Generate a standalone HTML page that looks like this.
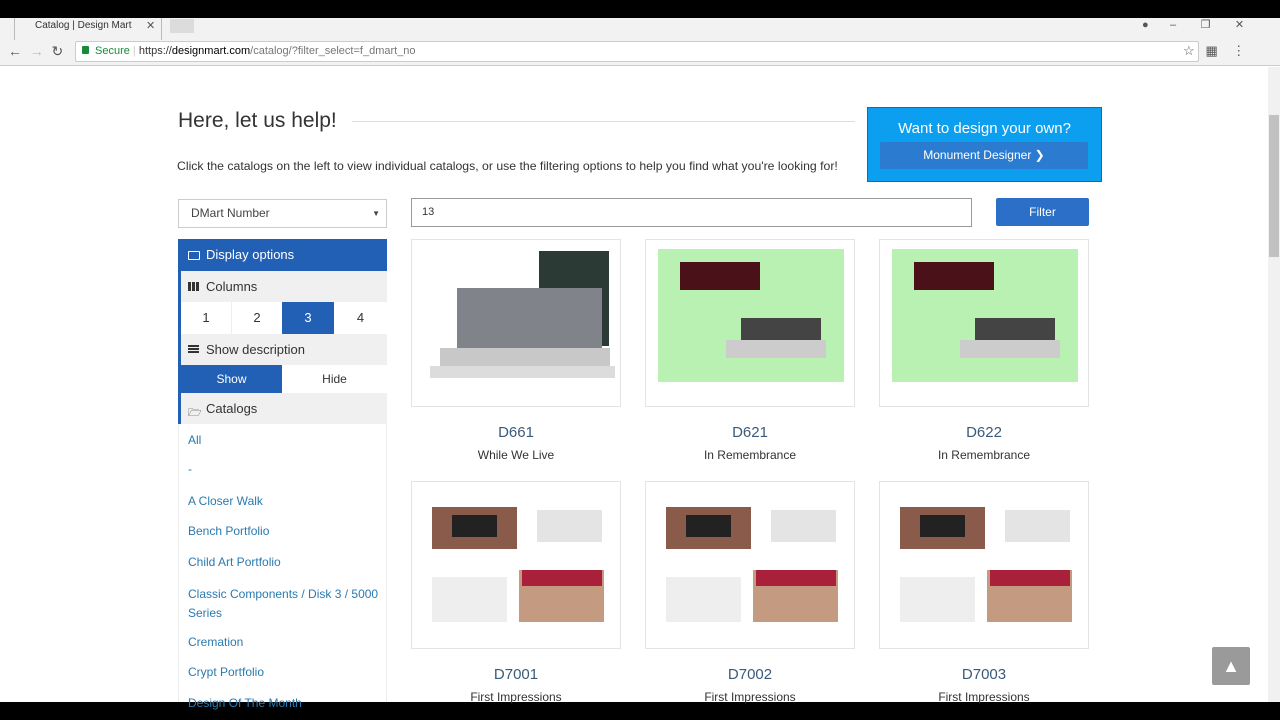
<!DOCTYPE html><html><head><style>
*{box-sizing:border-box;margin:0;padding:0}
body{width:1280px;height:720px;overflow:hidden;background:#fff;font-family:"Liberation Sans",sans-serif;position:relative;color:#333}
.a{position:absolute}
.card{position:absolute;width:210px;height:168px;border:1px solid #e3e3e3;background:#fff}
.t{position:absolute;width:210px;text-align:center;font-size:15px;color:#3a5a7a}
.s{position:absolute;width:210px;text-align:center;font-size:12px;color:#333}
.lnk{position:absolute;left:188px;font-size:12px;color:#2a7ab0}
</style></head><body>
<div class="a" style="left:0;top:0;width:1280px;height:18px;background:#000"></div>
<div class="a" style="left:0;top:18px;width:1280px;height:48px;background:#f2f2f2;border-bottom:1px solid #ccc"></div>
<div class="a" style="left:14px;top:18px;width:148px;height:22px;background:#f2f2f2;border-left:1px solid #bbb;border-right:1px solid #bbb"></div>
<div class="a" style="left:170px;top:19px;width:24px;height:14px;background:#dcdcdc"></div>
<div class="a" style="left:35px;top:20px;font-size:10px;color:#333">Catalog | Design Mart</div>
<div class="a" style="left:146px;top:19px;font-size:11px;color:#555">✕</div>
<div class="a" style="left:1142px;top:18px;font-size:11px;color:#555">●&nbsp;&nbsp;&nbsp;&nbsp;&nbsp;&nbsp;&nbsp;–&nbsp;&nbsp;&nbsp;&nbsp;&nbsp;&nbsp;&nbsp;&nbsp;❐&nbsp;&nbsp;&nbsp;&nbsp;&nbsp;&nbsp;&nbsp;&nbsp;✕</div>
<div class="a" style="left:8px;top:43px;font-size:14px;color:#555">←&nbsp;&nbsp;<span style="color:#bbb">→</span>&nbsp;&nbsp;↻</div>
<div class="a" style="left:75px;top:41px;width:1124px;height:21px;background:#fff;border:1px solid #ccc;border-radius:2px"></div>
<div class="a" style="left:82px;top:46px;width:7px;height:8px;background:#1a8a3a;border-radius:1px"></div>
<div class="a" style="left:95px;top:45px;font-size:11px;color:#1a8a3a">Secure <span style="color:#ccc">|</span> <span style="color:#333">https://<b style="font-weight:normal;color:#000">designmart.com</b></span><span style="color:#777">/catalog/?filter_select=f_dmart_no</span></div>
<div class="a" style="left:1183px;top:43px;font-size:13px;color:#555">☆&nbsp;&nbsp;&nbsp;▦&nbsp;&nbsp;&nbsp;&nbsp;⋮</div>
<div class="a" style="left:1268px;top:67px;width:12px;height:635px;background:#f1f1f1"></div>
<div class="a" style="left:1269px;top:115px;width:10px;height:142px;background:#c1c1c1"></div>
<div class="a" style="left:0;top:702px;width:1280px;height:18px;background:#000"></div>

<div class="a" style="left:178px;top:109px;font-size:21px;color:#333">Here, let us help!</div>
<div class="a" style="left:352px;top:121px;width:503px;height:1px;background:#ddd"></div>
<div class="a" style="left:177px;top:159px;font-size:12.25px;color:#333">Click the catalogs on the left to view individual catalogs, or use the filtering options to help you find what you're looking for!</div>
<div class="a" style="left:867px;top:107px;width:235px;height:75px;background:#0c9ff0;border:1px solid #0a6fb0"></div>
<div class="a" style="left:867px;top:120px;width:235px;text-align:center;font-size:15px;color:#fff">Want to design your own?</div>
<div class="a" style="left:880px;top:142px;width:208px;height:27px;background:#2b7bd0;border-radius:2px;color:#fff;font-size:12px;text-align:center;line-height:27px">Monument Designer ❯</div>

<div class="a" style="left:178px;top:199px;width:209px;height:29px;border:1px solid #ccc;font-size:12px;line-height:27px;padding-left:12px;color:#444">DMart Number<span style="position:absolute;right:6px;font-size:8px">▼</span></div>
<div class="a" style="left:411px;top:198px;width:561px;height:29px;border:1px solid #999;font-size:11px;line-height:27px;padding-left:10px">13</div>
<div class="a" style="left:996px;top:198px;width:93px;height:28px;background:#2b6fc8;border-radius:2px;color:#fff;font-size:12px;text-align:center;line-height:28px">Filter</div>

<div class="a" style="left:178px;top:239px;width:209px;height:32px;background:#2260b6;color:#fff;font-size:13px;line-height:32px;padding-left:28px">Display options</div>
<div class="a" style="left:188px;top:251px;width:12px;height:9px;border:1.5px solid #fff;border-radius:1px"></div>
<div class="a" style="left:178px;top:271px;width:209px;height:31px;background:#f0f0f0;border-left:3px solid #2260b6;font-size:13px;line-height:31px;padding-left:25px">Columns</div>
<div class="a" style="left:188px;top:282px;width:11px;height:9px;background:repeating-linear-gradient(90deg,#333 0 3px,transparent 3px 4px)"></div>
<div class="a" style="left:178px;top:302px;width:209px;height:32px;font-size:13px;line-height:32px;border-left:3px solid #2260b6">
<span class="a" style="left:0;width:50px;text-align:center">1</span><span class="a" style="left:50px;width:51px;text-align:center;border-left:1px solid #eee">2</span><span class="a" style="left:101px;width:52px;height:32px;text-align:center;background:#2260b6;color:#fff">3</span><span class="a" style="left:153px;width:53px;text-align:center">4</span></div>
<div class="a" style="left:178px;top:334px;width:209px;height:31px;background:#f0f0f0;border-left:3px solid #2260b6;font-size:13px;line-height:31px;padding-left:25px">Show description</div>
<div class="a" style="left:188px;top:345px;width:11px;height:9px;background:repeating-linear-gradient(180deg,#333 0 2px,transparent 2px 3px)"></div>
<div class="a" style="left:178px;top:365px;width:209px;height:28px;font-size:12px;line-height:28px;border-left:3px solid #2260b6">
<span class="a" style="left:0;width:101px;height:28px;background:#2260b6;color:#fff;text-align:center">Show</span><span class="a" style="left:101px;width:105px;text-align:center">Hide</span></div>
<div class="a" style="left:178px;top:393px;width:209px;height:31px;background:#f0f0f0;border-left:3px solid #2260b6;font-size:13px;line-height:31px;padding-left:25px">Catalogs</div>
<div class="a" style="left:188px;top:404px;font-size:11px">🗁</div>
<div class="a" style="left:178px;top:424px;width:209px;height:278px;border-left:1px solid #eee;border-right:1px solid #eee"></div>
<div class="lnk" style="top:433px">All</div>
<div class="lnk" style="top:462px">-</div>
<div class="lnk" style="top:494px">A Closer Walk</div>
<div class="lnk" style="top:524px">Bench Portfolio</div>
<div class="lnk" style="top:555px">Child Art Portfolio</div>
<div class="lnk" style="top:585px;line-height:19px">Classic Components / Disk 3 / 5000<br>Series</div>
<div class="lnk" style="top:635px">Cremation</div>
<div class="lnk" style="top:665px">Crypt Portfolio</div>
<div class="lnk" style="top:696px">Design Of The Month</div>

<div class="card" style="left:411px;top:239px">
<div class="a" style="left:127px;top:11px;width:70px;height:95px;background:#2c3a36"></div>
<div class="a" style="left:45px;top:48px;width:145px;height:62px;background:#80848a"></div>
<div class="a" style="left:28px;top:108px;width:170px;height:18px;background:#c8c8c8"></div>
<div class="a" style="left:18px;top:126px;width:185px;height:12px;background:#dcdcdc"></div></div>
<div class="card" style="left:645px;top:239px"><div class="a" style="left:12px;top:9px;width:186px;height:133px;background:#b9f1b3"></div>
<div class="a" style="left:34px;top:22px;width:80px;height:28px;background:#4a1118"></div><div class="a" style="left:95px;top:78px;width:80px;height:22px;background:#444"></div><div class="a" style="left:80px;top:100px;width:100px;height:18px;background:#ccc"></div></div>
<div class="card" style="left:879px;top:239px"><div class="a" style="left:12px;top:9px;width:186px;height:133px;background:#b9f1b3"></div>
<div class="a" style="left:34px;top:22px;width:80px;height:28px;background:#4a1118"></div><div class="a" style="left:95px;top:78px;width:80px;height:22px;background:#444"></div><div class="a" style="left:80px;top:100px;width:100px;height:18px;background:#ccc"></div></div>
<div class="t" style="left:411px;top:424px">D661</div><div class="s" style="left:411px;top:448px">While We Live</div>
<div class="t" style="left:645px;top:424px">D621</div><div class="s" style="left:645px;top:448px">In Remembrance</div>
<div class="t" style="left:879px;top:424px">D622</div><div class="s" style="left:879px;top:448px">In Remembrance</div>

<div class="card" style="left:411px;top:481px"><div class="a" style="left:20px;top:25px;width:85px;height:42px;background:#8a5a4a"></div><div class="a" style="left:40px;top:33px;width:45px;height:22px;background:#222"></div><div class="a" style="left:125px;top:28px;width:65px;height:32px;background:#e4e4e4"></div><div class="a" style="left:20px;top:95px;width:75px;height:45px;background:#eee"></div><div class="a" style="left:107px;top:88px;width:85px;height:52px;background:#c49a80"></div><div class="a" style="left:110px;top:88px;width:80px;height:16px;background:#a8203a"></div></div>
<div class="card" style="left:645px;top:481px"><div class="a" style="left:20px;top:25px;width:85px;height:42px;background:#8a5a4a"></div><div class="a" style="left:40px;top:33px;width:45px;height:22px;background:#222"></div><div class="a" style="left:125px;top:28px;width:65px;height:32px;background:#e4e4e4"></div><div class="a" style="left:20px;top:95px;width:75px;height:45px;background:#eee"></div><div class="a" style="left:107px;top:88px;width:85px;height:52px;background:#c49a80"></div><div class="a" style="left:110px;top:88px;width:80px;height:16px;background:#a8203a"></div></div>
<div class="card" style="left:879px;top:481px"><div class="a" style="left:20px;top:25px;width:85px;height:42px;background:#8a5a4a"></div><div class="a" style="left:40px;top:33px;width:45px;height:22px;background:#222"></div><div class="a" style="left:125px;top:28px;width:65px;height:32px;background:#e4e4e4"></div><div class="a" style="left:20px;top:95px;width:75px;height:45px;background:#eee"></div><div class="a" style="left:107px;top:88px;width:85px;height:52px;background:#c49a80"></div><div class="a" style="left:110px;top:88px;width:80px;height:16px;background:#a8203a"></div></div>
<div class="t" style="left:411px;top:666px">D7001</div><div class="s" style="left:411px;top:690px">First Impressions</div>
<div class="t" style="left:645px;top:666px">D7002</div><div class="s" style="left:645px;top:690px">First Impressions</div>
<div class="t" style="left:879px;top:666px">D7003</div><div class="s" style="left:879px;top:690px">First Impressions</div>
<div class="a" style="left:1212px;top:647px;width:38px;height:38px;background:#9a9a9a;border-radius:2px;color:#fff;text-align:center;font-size:18px;line-height:38px">▲</div>
</body></html>
